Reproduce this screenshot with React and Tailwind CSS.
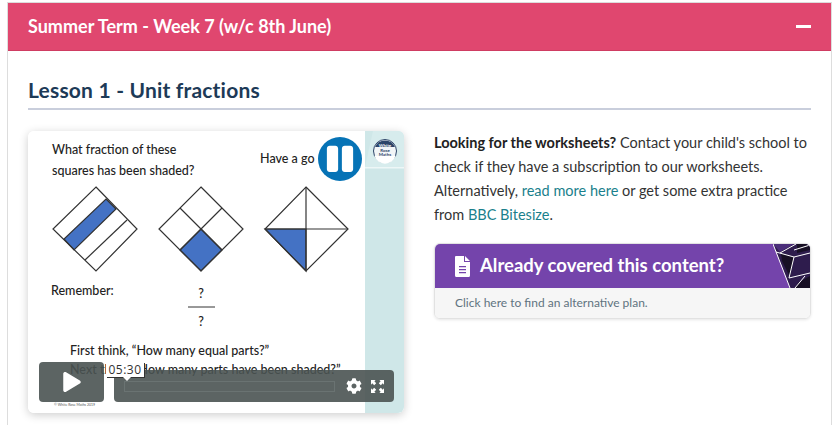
import React from 'react';
import { FaPause, FaPlay, FaCog } from 'react-icons/fa';

const sans = 'font-["Lato",sans-serif]';

// the video's current frame, drawn in page coordinates
const Slide = () => (
  <svg viewBox="28 131 376 282" className="block w-full h-full">
    <rect x="28" y="131" width="376" height="282" fill="#ffffff" />
    <rect x="365" y="131" width="39" height="282" fill="#cfe7e8" />
    <path d="M373 131H404V167H365Z" fill="#d7eced" />
    <rect x="365" y="167" width="39" height="1.5" fill="#eef7f7" />
    <circle cx="385" cy="151" r="11.5" fill="#f2f5f7" stroke="#2c4468" strokeWidth="1" />
    <path d="M375 147a11 11 0 0 1 20 0Z" fill="#2c4468" />
    <path d="M374.5 156h21a11 11 0 0 1-21 0Z" fill="#fff" />
    <g fontFamily="Lato, sans-serif" fontSize="4.5" textAnchor="middle" fontWeight="700" fill="#2c4468">
      <text x="385" y="146.5" fill="#ffffff">White</text>
      <text x="385" y="151.5">Rose</text>
      <text x="385" y="156">Maths</text>
    </g>

    <g fontFamily="Lato, sans-serif" fontSize="12.5" fill="#222222" fontWeight="500">
      <text x="52" y="154">What fraction of these</text>
      <text x="52" y="175">squares has been shaded?</text>
      <text x="260" y="163">Have a go</text>
      <text x="51" y="295">Remember:</text>
      <text x="201" y="298" textAnchor="middle">?</text>
      <text x="201" y="326" textAnchor="middle">?</text>
      <text x="70" y="355">First think, “How many equal parts?”</text>
      <text x="70" y="374">Next think, “How many parts have been shaded?”</text>
    </g>
    <text x="54" y="406" fontFamily="Lato, sans-serif" fontSize="3.5" fill="#555">© White Rose Maths 2019</text>
    <path d="M188 307H215" stroke="#333" strokeWidth="1" />

    <g stroke="#333333" strokeWidth="1.2" fill="none">
      <path d="M106 199L116 209L74 250L64 239Z" fill="#4472c4" />
      <path d="M96 187L137 229L96 271L53 229Z" />
      <path d="M127 220L85 260" />

      <path d="M201 229L222 250L201 271L180 250Z" fill="#4472c4" />
      <path d="M201 187L243 229L201 271L159 229Z" />
      <path d="M180 208L222 250M222 208L180 250" />

      <path d="M265 229H306V271Z" fill="#4472c4" />
      <path d="M306 187L348 229L306 271L265 229Z" />
      <path d="M306 187V271M265 229H348" />
    </g>
  </svg>
);

const Corner = () => (
  <svg viewBox="0 0 37 44" className="absolute top-0 right-0 w-[37px] h-[44px]">
    <path d="M0 0H37V44H17Z" fill="#2e1c4d" />
    <path d="M0 0L21 0L7 8Z" fill="#4b2e7a" />
    <path d="M8 9L21 13L17 33L9 17Z" fill="#170f24" />
    <path d="M24 0H37V6L24 9Z" fill="#170f24" />
    <path d="M26 38L37 32V44H22Z" fill="#170f24" />
    <path d="M0 0L17 44M3 8L21 13L16 34M21 13L37 9M7 9L23 0M21 6L37 1M16 34L37 29M22 44L32 32" stroke="#ffffff" strokeWidth="1" fill="none" />
  </svg>
);

const VideoPlayer = () => (
  <div className="relative w-[376px] h-[282px] rounded-md overflow-hidden shadow-[0_2px_10px_rgba(0,0,0,0.2)]">
    <Slide />
    <div className="absolute left-[136px] top-[32px] w-[44px] h-[44px] -translate-x-[-132px] -translate-y-[-6px]" />
    <div className="absolute left-[290px] top-[6px] w-11 h-11 rounded-full bg-[#0673b6] flex items-center justify-center">
      <FaPause className="text-white text-[30px]" />
    </div>
    <div className="absolute left-[11px] top-[231px] w-[65px] h-10 rounded bg-[#4a5352]/90 flex items-center justify-center">
      <FaPlay className="text-white text-[20px]" />
    </div>
    <div className="absolute left-[86px] top-[239px] w-[280px] h-8 rounded-sm bg-[#4a5352]/90 flex items-center pl-[10px] pr-[7px]">
      <div className="w-[211px] h-[11px] border border-[#6a7372]" />
      <FaCog className="ml-[11px] text-white text-[16px]" />
      <svg viewBox="0 0 14 14" className="ml-[9px] w-[13px] h-[13px]" fill="#ffffff">
        <path d="M0 0H5L3.6 1.4L5.6 3.4L3.4 5.6L1.4 3.6L0 5ZM14 0V5L12.6 3.6L10.6 5.6L8.4 3.4L10.4 1.4L9 0ZM0 14V9L1.4 10.4L3.4 8.4L5.6 10.6L3.6 12.6L5 14ZM14 14H9L10.4 12.6L8.4 10.6L10.6 8.4L12.6 10.4L14 9Z" />
      </svg>
    </div>
    <div className="absolute left-[78px] top-[231px] w-[38px] h-[15px] bg-white shadow-[1px_1px_0_#333] flex items-center justify-center text-[12px] leading-none tracking-[0.5px] text-[#333] font-['Open_Sans',sans-serif]">
      05:30
      <div className="absolute left-[17px] top-[15px] w-0 h-0 border-x-[4px] border-x-transparent border-t-[4px] border-t-white" />
    </div>
  </div>
);

const App = () => {
  return (
    <div className={`h-screen overflow-hidden bg-white pt-[2px] ${sans}`}>
      <div className="h-px ml-[7px] w-[825px] bg-[#dcdcdc]" />
      <div className="ml-[7px] w-[825px] min-h-[422px] border-x border-[#dddddd]">
        <div className="h-[48px] bg-[#e0476f] border-b border-[#cf3c62] flex items-center justify-between pl-5 pr-[20px]">
          <span className="text-[18px] font-bold text-white">Summer Term - Week 7 (w/c 8th June)</span>
          <span className="w-[15px] h-[3px] bg-white" />
        </div>
        <div className="px-5">
          <h2 className="mt-[25px] text-[21px] leading-[28px] font-bold text-[#1d3a57] tracking-[0.2px]">Lesson 1 - Unit fractions</h2>
          <div className="mt-[4px] h-[2px] bg-[#c9cedc]" />
          <div className="mt-[21px] flex gap-[30px]">
            <VideoPlayer />
            <div className="w-[377px]">
              <p className="text-[14.5px] leading-[24px] text-[#333333]">
                <strong className="font-bold text-[#222222]">Looking for the worksheets?</strong> Contact your child's school to check if they have a subscription to our worksheets. Alternatively, <a className="text-[#1a7f8c]">read more here</a> or get some extra practice from <a className="text-[#1a7f8c]">BBC Bitesize</a>.
              </p>
              <div className="mt-[16px] rounded-md overflow-hidden border border-[#e2e2e2] shadow-[0_1px_3px_rgba(0,0,0,0.1)]">
                <div className="relative h-[44px] bg-[#7444ab] flex items-center pl-5">
                  <svg viewBox="0 0 15 21" className="w-[15px] h-[21px]">
                    <path d="M1 0H9V6H15V19.5A1.5 1.5 0 0 1 13.5 21H1.5A1.5 1.5 0 0 1 0 19.5V1A1 1 0 0 1 1 0ZM10 0L15 5H10Z" fill="#ffffff" />
                    <path d="M4 10H11V11.2H4ZM4 13H11V14.2H4ZM4 16H11V17.2H4Z" fill="#7444ab" />
                  </svg>
                  <span className="ml-[10px] text-[18.5px] font-bold text-white">Already covered this content?</span>
                  <Corner />
                </div>
                <div className="h-[30px] bg-[#f6f6f6] pl-5 flex items-center text-[12px] text-[#5f7380]">Click here to find an alternative plan.</div>
              </div>
            </div>
          </div>
        </div>
      </div>
    </div>
  );
};

export default App;
